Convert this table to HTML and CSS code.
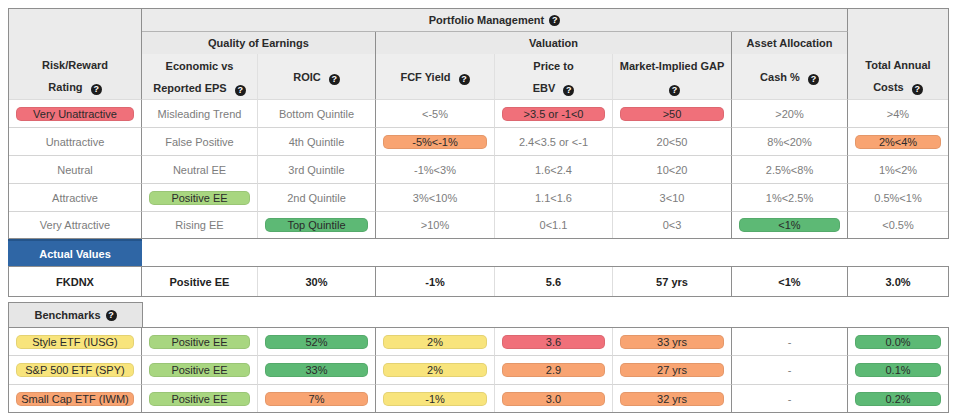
FILE: index.html
```html
<!DOCTYPE html>
<html>
<head>
<meta charset="utf-8">
<link rel="stylesheet" href="styles.css">
</head>
<body>
<div class="page">
  <div class="grid main">
    <div class="h side g"><div class="hbox"><span>Risk/Reward</span><span>Rating <i class="q">?</i></span></div></div>
    <div class="h pm g">Portfolio Management <i class="q">?</i></div>
    <div class="h side2"><div class="hbox"><span>Total Annual</span><span>Costs <i class="q">?</i></span></div></div>
    <div class="h grp qe g">Quality of Earnings</div>
    <div class="h grp val g">Valuation</div>
    <div class="h grp aa g">Asset Allocation</div>
    <div class="h sub"><div class="hbox"><span>Economic vs</span><span>Reported EPS <i class="q">?</i></span></div></div>
    <div class="h sub g"><div class="hbox"><span>ROIC <i class="q">?</i></span></div></div>
    <div class="h sub"><div class="hbox"><span>FCF Yield <i class="q">?</i></span></div></div>
    <div class="h sub"><div class="hbox"><span>Price to</span><span>EBV <i class="q">?</i></span></div></div>
    <div class="h sub g"><div class="hbox"><span>Market-Implied GAP</span><span><i class="q">?</i></span></div></div>
    <div class="h sub g"><div class="hbox"><span>Cash % <i class="q">?</i></span></div></div>

    <div class="c g"><span class="b red">Very Unattractive</span></div>
    <div class="c">Misleading Trend</div>
    <div class="c g">Bottom Quintile</div>
    <div class="c">&lt;-5%</div>
    <div class="c"><span class="b red">&gt;3.5 or -1&lt;0</span></div>
    <div class="c g"><span class="b red">&gt;50</span></div>
    <div class="c g">&gt;20%</div>
    <div class="c l">&gt;4%</div>

    <div class="c g">Unattractive</div>
    <div class="c">False Positive</div>
    <div class="c g">4th Quintile</div>
    <div class="c"><span class="b org">-5%&lt;-1%</span></div>
    <div class="c">2.4&lt;3.5 or &lt;-1</div>
    <div class="c g">20&lt;50</div>
    <div class="c g">8%&lt;20%</div>
    <div class="c l"><span class="b org">2%&lt;4%</span></div>

    <div class="c g">Neutral</div>
    <div class="c">Neutral EE</div>
    <div class="c g">3rd Quintile</div>
    <div class="c">-1%&lt;3%</div>
    <div class="c">1.6&lt;2.4</div>
    <div class="c g">10&lt;20</div>
    <div class="c g">2.5%&lt;8%</div>
    <div class="c l">1%&lt;2%</div>

    <div class="c g">Attractive</div>
    <div class="c"><span class="b lgr">Positive EE</span></div>
    <div class="c g">2nd Quintile</div>
    <div class="c">3%&lt;10%</div>
    <div class="c">1.1&lt;1.6</div>
    <div class="c g">3&lt;10</div>
    <div class="c g">1%&lt;2.5%</div>
    <div class="c l">0.5%&lt;1%</div>

    <div class="c g z">Very Attractive</div>
    <div class="c z">Rising EE</div>
    <div class="c g z"><span class="b grn">Top Quintile</span></div>
    <div class="c z">&gt;10%</div>
    <div class="c z">0&lt;1.1</div>
    <div class="c g z">0&lt;3</div>
    <div class="c g z"><span class="b grn">&lt;1%</span></div>
    <div class="c l z">&lt;0.5%</div>
  </div>

  <div class="actual">Actual Values</div>
  <div class="grid fk">
    <div class="c g z k">FKDNX</div>
    <div class="c z k">Positive EE</div>
    <div class="c g z k">30%</div>
    <div class="c z k">-1%</div>
    <div class="c z k">5.6</div>
    <div class="c g z k">57 yrs</div>
    <div class="c g z k">&lt;1%</div>
    <div class="c l z k">3.0%</div>
  </div>

  <div class="bench-h">Benchmarks <i class="q">?</i></div>
  <div class="grid bench">
    <div class="c g"><span class="b yel">Style ETF (IUSG)</span></div>
    <div class="c"><span class="b lgr">Positive EE</span></div>
    <div class="c g"><span class="b grn">52%</span></div>
    <div class="c"><span class="b yel">2%</span></div>
    <div class="c"><span class="b red">3.6</span></div>
    <div class="c g"><span class="b org">33 yrs</span></div>
    <div class="c g">-</div>
    <div class="c l"><span class="b grn">0.0%</span></div>

    <div class="c g"><span class="b yel">S&amp;P 500 ETF (SPY)</span></div>
    <div class="c"><span class="b lgr">Positive EE</span></div>
    <div class="c g"><span class="b grn">33%</span></div>
    <div class="c"><span class="b yel">2%</span></div>
    <div class="c"><span class="b org">2.9</span></div>
    <div class="c g"><span class="b org">27 yrs</span></div>
    <div class="c g">-</div>
    <div class="c l"><span class="b grn">0.1%</span></div>

    <div class="c g z"><span class="b org">Small Cap ETF (IWM)</span></div>
    <div class="c z"><span class="b lgr">Positive EE</span></div>
    <div class="c g z"><span class="b org">7%</span></div>
    <div class="c z"><span class="b yel">-1%</span></div>
    <div class="c z"><span class="b org">3.0</span></div>
    <div class="c g z"><span class="b org">32 yrs</span></div>
    <div class="c g z">-</div>
    <div class="c l z"><span class="b grn">0.2%</span></div>
  </div>
</div>
</body>
</html>
```

FILE: styles.css
```css
html, body {
  margin: 0;
  padding: 0;
  background: #fff;
}
body {
  font-family: "Liberation Sans", Arial, sans-serif;
  font-size: 11px;
}
.page {
  padding: 8px;
  width: 941px;
}
.grid {
  display: grid;
  grid-template-columns: 133px 116px 118px 119px 118px 119px 116px 100px;
  border: 1px solid #8e8e8e;
}
.main {
  grid-template-rows: 23px 22px 46px 28px 28px 28px 28px 26px;
}
.h {
  background: #ebebeb;
  color: #2a2a2a;
  font-weight: bold;
  box-sizing: border-box;
  display: flex;
  align-items: center;
  justify-content: center;
  border-right: 1px solid #e0e0e0;
}
.h.g, .c.g { border-right: 1px solid #8e8e8e; }
.side {
  grid-column: 1;
  grid-row: 1 / 4;
  align-items: flex-end;
  border-bottom: 1px solid #dcdcdc;
}
.side2 {
  grid-column: 8;
  grid-row: 1 / 4;
  align-items: flex-end;
  border-right: none;
  border-bottom: 1px solid #dcdcdc;
}
.pm {
  grid-column: 2 / 8;
  grid-row: 1;
  border-bottom: 1px solid #b4b4b4;
}
.grp {
  grid-row: 2;
  background: #e9e9e9;
}
.qe { grid-column: 2 / 4; }
.val { grid-column: 4 / 7; }
.aa { grid-column: 7; }
.sub {
  grid-row: 3;
  background: #eeeeee;
  border-bottom: 1px solid #dcdcdc;
}
.hbox {
  height: 46px;
  display: flex;
  flex-direction: column;
  justify-content: center;
  align-items: center;
  line-height: 22px;
}
.hbox span { white-space: nowrap; }
.q {
  display: inline-block;
  width: 11px;
  height: 11px;
  border-radius: 50%;
  background: #1c1c1c;
  color: #fff;
  font-style: normal;
  font-weight: bold;
  font-size: 9px;
  line-height: 11px;
  text-align: center;
  margin-left: 5px;
  vertical-align: -1px;
}
.c {
  box-sizing: border-box;
  display: flex;
  align-items: center;
  justify-content: center;
  color: #7c7c7c;
  border-right: 1px solid #dedede;
  border-bottom: 1px solid #d4d4d4;
  white-space: nowrap;
}
.c.l { border-right: none; }
.c.z { border-bottom: none; }
.c.k { color: #222; font-weight: bold; }
.b {
  flex: 1;
  margin: 0 7px;
  height: 12px;
  line-height: 12px;
  border-radius: 5px;
  text-align: center;
  color: #2a2a2a;
  box-sizing: content-box;
  border: 1px solid rgba(0, 0, 0, 0.08);
}
.red { background: #f0707a; }
.org { background: #f8a472; }
.lgr { background: #a8d680; }
.grn { background: #5db975; }
.yel { background: #f8e47c; }
.actual {
  width: 134px;
  height: 27px;
  box-sizing: border-box;
  background: #2f66a5;
  border-top: 2px solid #24548a;
  color: #fff;
  font-weight: bold;
  display: flex;
  align-items: center;
  justify-content: center;
}
.fk {
  grid-template-rows: 29px;
}
.bench-h {
  margin-top: 5px;
  width: 135px;
  height: 25px;
  box-sizing: border-box;
  background: #e6e6e6;
  border: 1px solid #8e8e8e;
  border-bottom: none;
  color: #2a2a2a;
  font-weight: bold;
  display: flex;
  align-items: center;
  justify-content: center;
}
.bench {
  grid-template-rows: 28px 29px 27px;
}
```
